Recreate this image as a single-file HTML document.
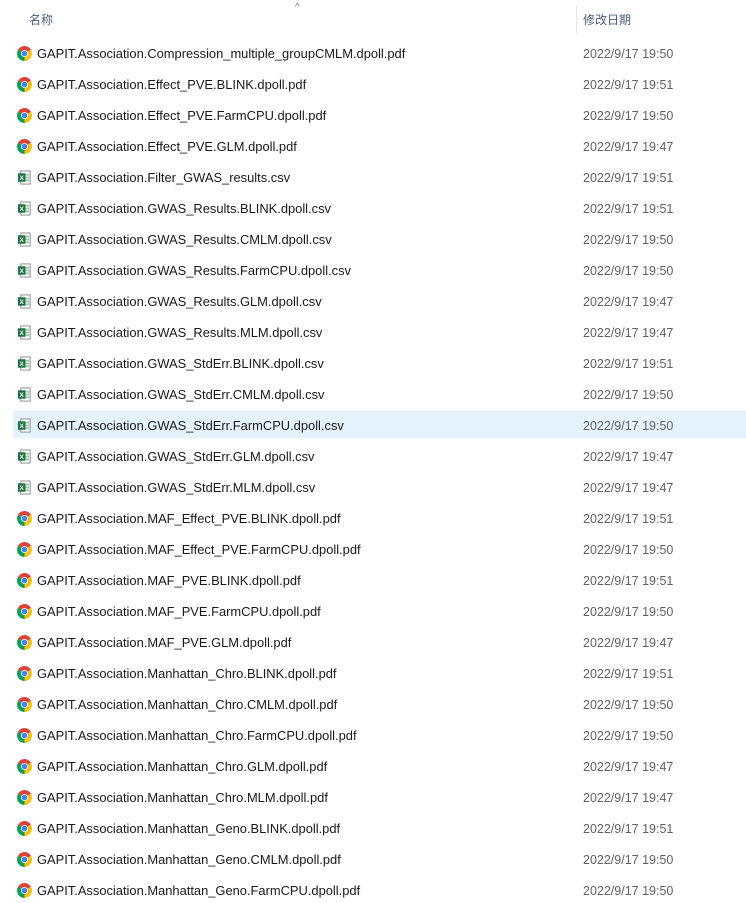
<!DOCTYPE html>
<html><head><meta charset="utf-8"><style>
*{margin:0;padding:0;box-sizing:border-box}
body{width:746px;height:887px;background:#fff;overflow:hidden;position:relative;font-family:"Liberation Sans","Noto Sans CJK SC",sans-serif;font-size:12.9px;color:#1a1a1a}
.h{position:absolute;top:11px;font-size:12px;color:#4c607a}
.div{position:absolute;left:576px;top:5px;width:1px;height:28px;background:#e5e5e5}
.caret{position:absolute;left:295px;top:2px;font-size:10px;color:#777}
.r{position:absolute;left:13px;width:733px;height:27px}
.r.sel{background:#e5f3ff}
.n{position:absolute;left:24px;top:6px;white-space:nowrap}
.d{position:absolute;left:570px;top:7px;color:#616161;font-size:12.5px;white-space:nowrap}
.ic{position:absolute;left:4px;top:6px;width:15px;height:15px}
</style></head><body>
<div class="caret">^</div>
<div class="h" style="left:29px">名称</div>
<div class="div"></div>
<div class="h" style="left:583px">修改日期</div>
<div id="rows"></div>
<script>
var items=[
["GAPIT.Association.Compression_multiple_groupCMLM.dpoll.pdf","19:50"],
["GAPIT.Association.Effect_PVE.BLINK.dpoll.pdf","19:51"],
["GAPIT.Association.Effect_PVE.FarmCPU.dpoll.pdf","19:50"],
["GAPIT.Association.Effect_PVE.GLM.dpoll.pdf","19:47"],
["GAPIT.Association.Filter_GWAS_results.csv","19:51"],
["GAPIT.Association.GWAS_Results.BLINK.dpoll.csv","19:51"],
["GAPIT.Association.GWAS_Results.CMLM.dpoll.csv","19:50"],
["GAPIT.Association.GWAS_Results.FarmCPU.dpoll.csv","19:50"],
["GAPIT.Association.GWAS_Results.GLM.dpoll.csv","19:47"],
["GAPIT.Association.GWAS_Results.MLM.dpoll.csv","19:47"],
["GAPIT.Association.GWAS_StdErr.BLINK.dpoll.csv","19:51"],
["GAPIT.Association.GWAS_StdErr.CMLM.dpoll.csv","19:50"],
["GAPIT.Association.GWAS_StdErr.FarmCPU.dpoll.csv","19:50"],
["GAPIT.Association.GWAS_StdErr.GLM.dpoll.csv","19:47"],
["GAPIT.Association.GWAS_StdErr.MLM.dpoll.csv","19:47"],
["GAPIT.Association.MAF_Effect_PVE.BLINK.dpoll.pdf","19:51"],
["GAPIT.Association.MAF_Effect_PVE.FarmCPU.dpoll.pdf","19:50"],
["GAPIT.Association.MAF_PVE.BLINK.dpoll.pdf","19:51"],
["GAPIT.Association.MAF_PVE.FarmCPU.dpoll.pdf","19:50"],
["GAPIT.Association.MAF_PVE.GLM.dpoll.pdf","19:47"],
["GAPIT.Association.Manhattan_Chro.BLINK.dpoll.pdf","19:51"],
["GAPIT.Association.Manhattan_Chro.CMLM.dpoll.pdf","19:50"],
["GAPIT.Association.Manhattan_Chro.FarmCPU.dpoll.pdf","19:50"],
["GAPIT.Association.Manhattan_Chro.GLM.dpoll.pdf","19:47"],
["GAPIT.Association.Manhattan_Chro.MLM.dpoll.pdf","19:47"],
["GAPIT.Association.Manhattan_Geno.BLINK.dpoll.pdf","19:51"],
["GAPIT.Association.Manhattan_Geno.CMLM.dpoll.pdf","19:50"],
["GAPIT.Association.Manhattan_Geno.FarmCPU.dpoll.pdf","19:50"]];
var chrome='<svg class="ic" viewBox="0 0 16 16"><path d="M8 8 L1.1 4 A8 8 0 0 1 14.9 4 Z" fill="#db4437"/><path d="M8 8 L14.9 4 A8 8 0 0 1 8 16 Z" fill="#f4c20d"/><path d="M8 8 L8 16 A8 8 0 0 1 1.1 4 Z" fill="#0f9d58"/><circle cx="8" cy="8" r="3.8" fill="#fff"/><circle cx="8" cy="8" r="3" fill="#4285f4"/></svg>';
var xls='<svg class="ic" viewBox="0 0 16 16"><rect x="4" y="1" width="10" height="14" fill="#fff" stroke="#8a8a8a"/><rect x="9" y="4" width="4" height="2" fill="#9cc9a8"/><rect x="9" y="7" width="4" height="2" fill="#9cc9a8"/><rect x="9" y="10" width="4" height="2" fill="#9cc9a8"/><rect x="1" y="3.5" width="8" height="9" fill="#1e7145"/><text x="5" y="10.8" font-size="7" font-family="Liberation Sans" font-weight="bold" fill="#fff" text-anchor="middle">X</text></svg>';
var h='';
items.forEach(function(it,i){
 var top=40+i*31;
 h+='<div class="r'+(i==12?' sel':'')+'" style="top:'+(top-1)+'px"><div style="position:absolute;top:1px;left:0;right:0;bottom:0">'+(it[0].slice(-3)=='pdf'?chrome:xls)+'<div class="n">'+it[0]+'</div><div class="d">2022/9/17 '+it[1]+'</div></div></div>';
});
document.getElementById('rows').innerHTML=h;
</script>
</body></html>
